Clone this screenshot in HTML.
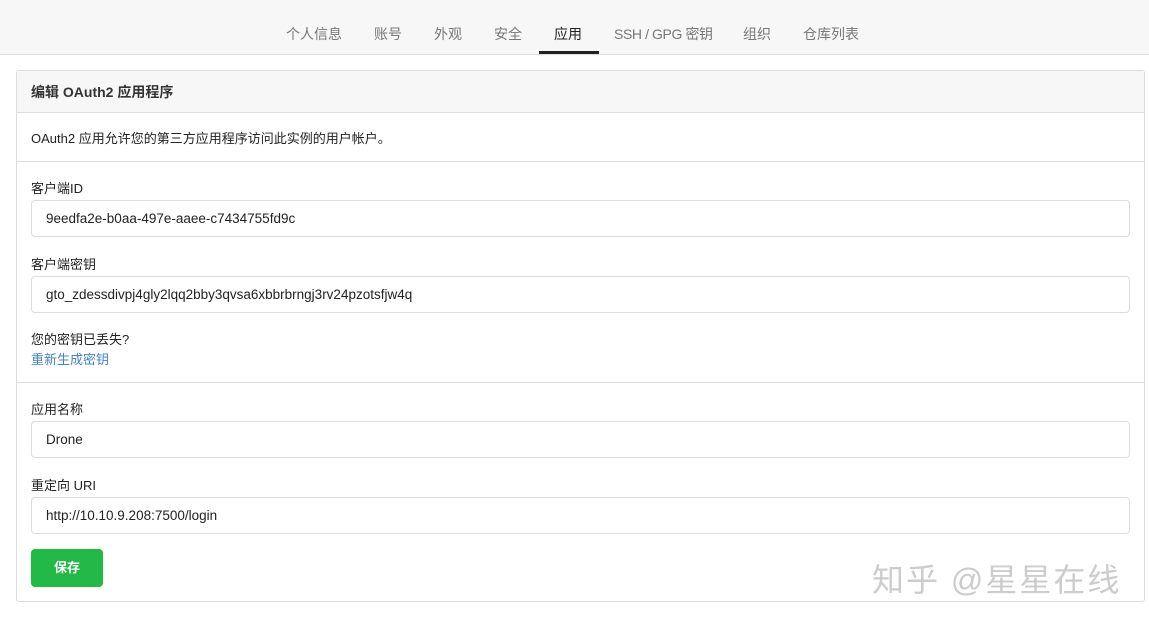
<!DOCTYPE html><html><head><meta charset="utf-8"><style>
body{margin:0;background:#fff;font-family:"Liberation Sans","Noto Sans CJK SC",sans-serif;font-size:13px;color:#333;width:1149px;height:621px;overflow:hidden;position:relative}
.nav{height:54px;background:#f7f7f7;border-bottom:1px solid #ddd;position:relative}
.nav span{position:absolute;top:24px;font-size:14px;color:#777}
.nav .a{color:#222}
.ul{position:absolute;left:539px;top:51px;width:60px;height:3px;background:#222}
.card{position:absolute;left:16px;top:70px;width:1127px;height:530px;border:1px solid #ddd;border-radius:3px}
.hd{height:41px;background:#f7f7f7;border-bottom:1px solid #ddd;font-size:14px;font-weight:bold;color:#333;line-height:42px;padding-left:14px}
.t{position:absolute;left:14px;color:#222}
.in{position:absolute;left:14px;border:1px solid #ddd;border-radius:4px;line-height:35px;padding-left:14px;box-sizing:border-box;width:1099px;height:37px;color:#222;font-size:13.5px}
.hr{position:absolute;left:0;width:1127px;height:1px;background:#ddd}
.btn{position:absolute;left:14px;top:478px;width:72px;height:38px;background:#21ba45;border-radius:4px;color:#fff;font-weight:bold;text-align:center;line-height:38px}
.wm{position:absolute;left:872px;top:555px;font-size:32px;color:#ccc;letter-spacing:2px}
</style></head><body>
<div class="nav">
<span style="left:286px">个人信息</span><span style="left:374px">账号</span><span style="left:434px">外观</span><span style="left:494px">安全</span><span class="a" style="left:554px">应用</span><span style="left:614px;letter-spacing:-0.4px">SSH / GPG 密钥</span><span style="left:743px">组织</span><span style="left:803px">仓库列表</span>
<div class="ul"></div></div>
<div class="card">
<div class="hd">编辑 OAuth2 应用程序</div>
<div class="t" style="top:57px">OAuth2 应用允许您的第三方应用程序访问此实例的用户帐户。</div>
<div class="hr" style="top:90px"></div>
<div class="t" style="top:107px">客户端ID</div>
<div class="in" style="top:129px">9eedfa2e-b0aa-497e-aaee-c7434755fd9c</div>
<div class="t" style="top:183px">客户端密钥</div>
<div class="in" style="top:205px">gto_zdessdivpj4gly2lqq2bby3qvsa6xbbrbrngj3rv24pzotsfjw4q</div>
<div class="t" style="top:258px">您的密钥已丢失?</div>
<div class="t" style="top:278px;color:#4183c4">重新生成密钥</div>
<div class="hr" style="top:311px"></div>
<div class="t" style="top:328px">应用名称</div>
<div class="in" style="top:350px">Drone</div>
<div class="t" style="top:404px">重定向 URI</div>
<div class="in" style="top:426px">http://10.10.9.208:7500/login</div>
<div class="btn">保存</div>
</div>
<div class="wm">知乎 @星星在线</div>
</body></html>
